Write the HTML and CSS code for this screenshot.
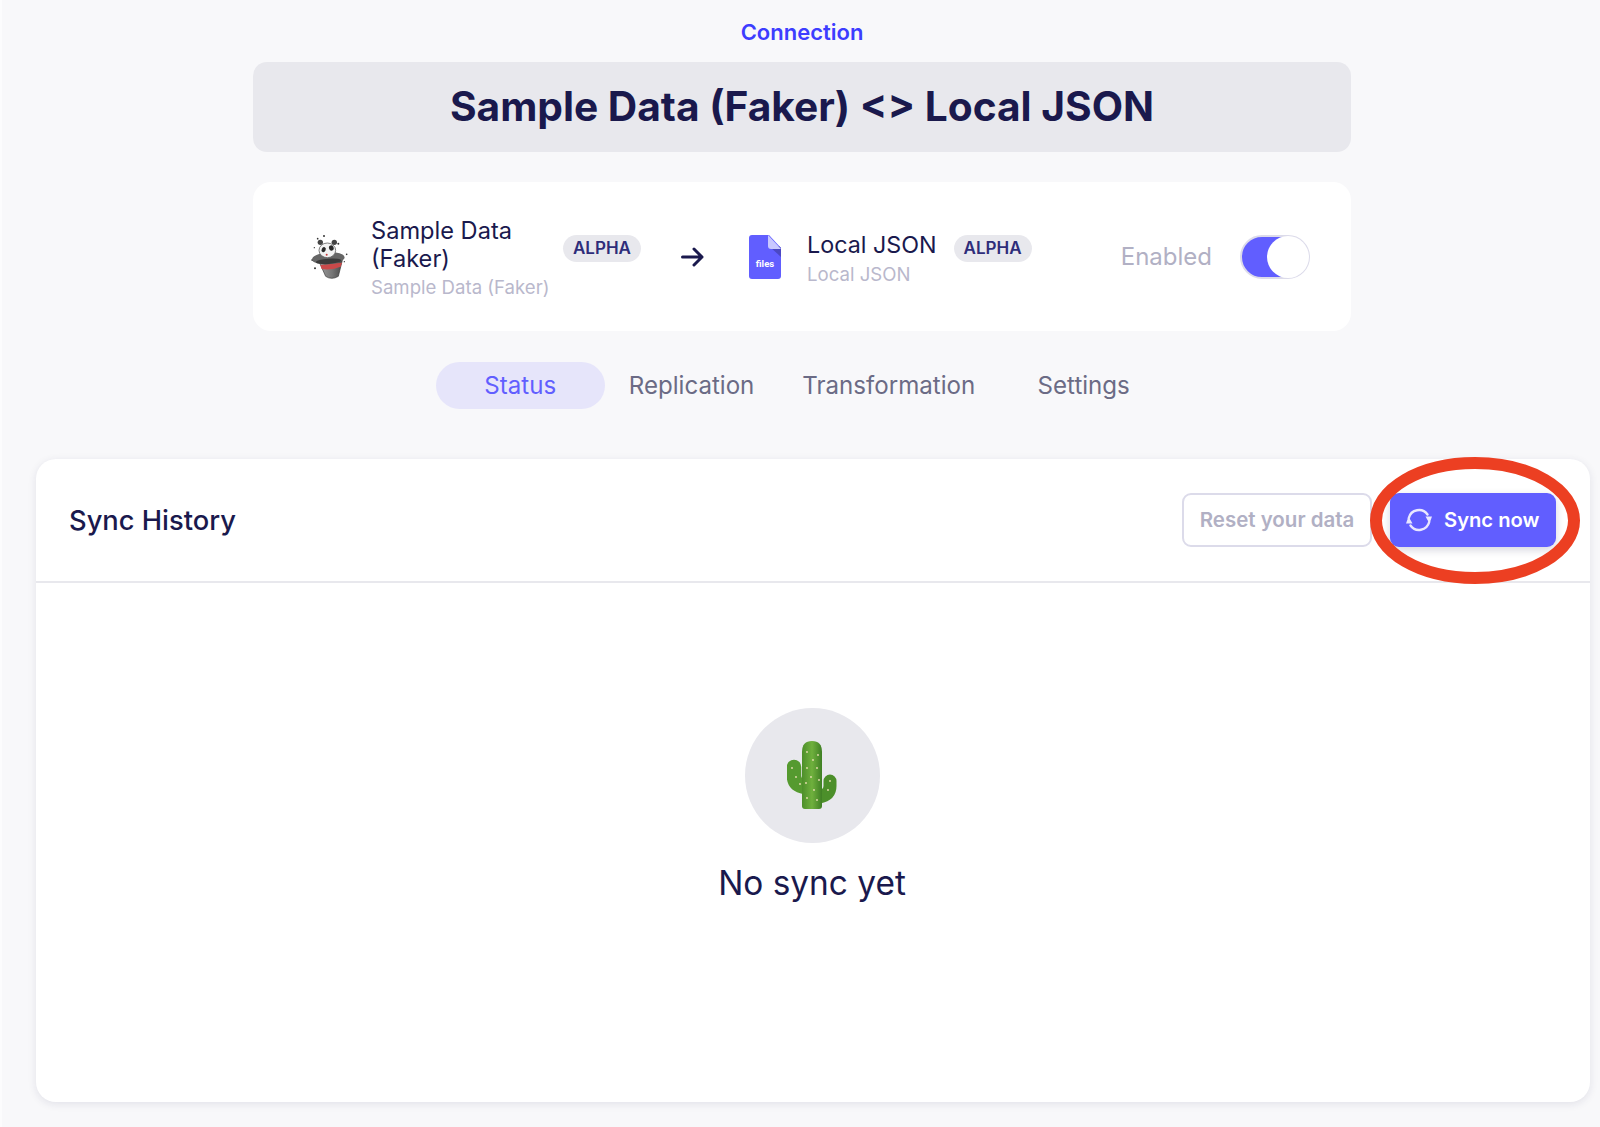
FILE: index.html
```html
<!DOCTYPE html>
<html lang="en">
<head>
<meta charset="utf-8">
<title>Connection</title>
<link rel="stylesheet" href="styles.css">
</head>
<body>
<div class="page">
  <div class="column">
    <div class="crumb">Connection</div>
    <h1 class="title">Sample Data (Faker) &lt;&gt; Local JSON</h1>
    <section class="conn-card">
      <svg class="panda" viewBox="0 0 144 156" aria-hidden="true">
        <defs>
          <linearGradient id="hatg" x1="0" y1="0" x2="1" y2="0">
            <stop offset="0" stop-color="#9a9a9a"/><stop offset=".55" stop-color="#767676"/><stop offset="1" stop-color="#4a4a4a"/>
          </linearGradient>
        </defs>
        <g fill="#333"><circle cx="57" cy="15" r="3"/><circle cx="38" cy="23" r="2.500"/><circle cx="100" cy="38" r="3"/><circle cx="28" cy="50" r="2"/><circle cx="22" cy="87" r="3"/><circle cx="30" cy="112" r="3"/><circle cx="125" cy="70" r="2.500"/><circle cx="118" cy="92" r="2"/></g>
        <path d="M44 96 L112 88 L100 136 Q80 148 62 136 Z" fill="url(#hatg)" stroke="#333" stroke-width="2"/>
        <path d="M46 102 L111 95 L107 107 Q78 119 50 114 Z" fill="#c8494a"/>
        <ellipse cx="70" cy="82" rx="49" ry="18" transform="rotate(-4 70 82)" fill="#666"/>
        <ellipse cx="71" cy="91" rx="38" ry="8" transform="rotate(-4 71 91)" fill="#3a3a3a"/>
        <circle cx="46" cy="34" r="8" fill="#444"/><circle cx="88" cy="34" r="8" fill="#444"/>
        <ellipse cx="67" cy="58" rx="25" ry="22" fill="#f2f2f2" stroke="#666" stroke-width="2.500"/>
        <ellipse cx="56" cy="56" rx="6" ry="8" transform="rotate(25 56 56)" fill="#2a2a2a"/>
        <ellipse cx="79" cy="51" rx="7" ry="8" transform="rotate(-20 79 51)" fill="#2a2a2a"/>
        <circle cx="65" cy="71" r="3" fill="#c43c3c"/>
      </svg>
      <div class="source-text">
        <div class="name">Sample Data (Faker)</div>
        <div class="sub">Sample Data (Faker)</div>
      </div>
      <span class="badge">ALPHA</span>
      <svg class="arrow" viewBox="0 0 23 20" aria-hidden="true">
        <path d="M1.500 10 H21 M13 2 L21 10 L13 18" fill="none" stroke="#1a194d" stroke-width="3" stroke-linecap="round" stroke-linejoin="round"/>
      </svg>
      <svg class="file" viewBox="0 0 32 44" aria-hidden="true">
        <path d="M3 0 H20 L32 13 V41 Q32 44 29 44 H3 Q0 44 0 41 V3 Q0 0 3 0 Z" fill="#615eff"/>
        <path d="M20 11 H30 L32 13 V22 Z" fill="#4b48c4"/>
        <path d="M19 0 L32 14 H22 Q19 14 19 11 Z" fill="#c9c8ff"/>
        <text x="16" y="32" class="file-label" text-anchor="middle">files</text>
      </svg>
      <div class="dest-text">
        <div class="name">Local JSON</div>
        <div class="sub">Local JSON</div>
      </div>
      <span class="badge">ALPHA</span>
      <span class="enabled">Enabled</span>
      <span class="toggle"><span class="knob"></span></span>
    </section>
    <nav class="tabs">
      <span class="tab active">Status</span>
      <span class="tab">Replication</span>
      <span class="tab">Transformation</span>
      <span class="tab">Settings</span>
    </nav>
  </div>
  <section class="main-card">
    <header class="main-head">
      <h2 class="main-title">Sync History</h2>
      <div class="actions">
        <button class="btn btn-ghost">Reset your data</button>
        <button class="btn btn-primary">
          <svg class="sync-icon" viewBox="0 0 26 26" aria-hidden="true">
            <path d="M2.800 11 A10.500 10.500 0 0 1 21.500 7.500 M23.200 15 A10.500 10.500 0 0 1 4.500 18.500" fill="none" stroke="#e8e7ff" stroke-width="2.400" stroke-linecap="round"/>
            <path d="M19.500 9.500 L26 9.500 L23.500 16.500 Z M6.500 16.500 L0 16.500 L2.500 9.500 Z" fill="#e8e7ff"/>
          </svg>
          Sync now
        </button>
      </div>
      <svg class="annotation" viewBox="0 0 210 127" aria-hidden="true">
        <ellipse cx="105" cy="63.500" rx="99" ry="57.500" fill="none" stroke="#ec3f22" stroke-width="12"/>
      </svg>
    </header>
    <div class="empty">
      <div class="empty-circle">
        <svg class="cactus" viewBox="788 741 51 69" aria-hidden="true">
          <defs>
            <linearGradient id="cg" x1="0" y1="0" x2="1" y2="0">
              <stop offset="0" stop-color="#4d8f2a"/><stop offset=".5" stop-color="#6fb03d"/><stop offset="1" stop-color="#3f7f24"/>
            </linearGradient>
          </defs>
          <path d="M795 767 V776 Q795 785 806 787" fill="none" stroke="#559a2f" stroke-width="14.500" stroke-linecap="round"/>
          <path d="M831 781 V786 Q831 795 820 797" fill="none" stroke="#4c8f2a" stroke-width="13" stroke-linecap="round"/>
          <path d="M803 752 Q803 741 813 741 Q823 741 823 752 V806 Q823 809 820 809 H806 Q803 809 803 806 Z" fill="url(#cg)"/>
          <g fill="#e8dfb0"><circle cx="808" cy="752" r=".9"/><circle cx="814" cy="760" r=".9"/><circle cx="819" cy="755" r=".9"/><circle cx="808" cy="768" r=".9"/><circle cx="818" cy="768" r=".9"/><circle cx="812" cy="777" r=".9"/><circle cx="820" cy="780" r=".9"/><circle cx="807" cy="783" r=".9"/><circle cx="815" cy="790" r=".9"/><circle cx="808" cy="798" r=".9"/><circle cx="818" cy="800" r=".9"/><circle cx="793" cy="768" r=".9"/><circle cx="797" cy="777" r=".9"/><circle cx="801" cy="784" r=".9"/><circle cx="831" cy="781" r=".9"/><circle cx="829" cy="790" r=".9"/></g>
        </svg>
      </div>
      <p class="empty-text">No sync yet</p>
    </div>
  </section>
</div>
</body>
</html>
```
FILE: styles.css
```css
* { box-sizing: border-box; }
html, body { margin: 0; height: 100%; }
body {
  background: #f8f8fa;
  color: #1a194d;
  font-family: Inter, "Liberation Sans", sans-serif;
}
.page {
  min-height: 1127px;
  padding: 16px 10px 25px 34px;
  border-left: 2px solid #fcfcfd;
}
.column {
  width: 1098px;
  margin-left: 217px;
}
.crumb {
  height: 32px;
  line-height: 32px;
  text-align: center;
  font-size: 22px;
  font-weight: 600;
  color: #3d3dff;
}
.title {
  height: 90px;
  margin: 14px 0 0;
  line-height: 90px;
  text-align: center;
  font-size: 40.700px;
  font-weight: 700;
  background: #e8e8ed;
  border-radius: 14px;
}
.conn-card {
  display: flex;
  align-items: center;
  height: 149px;
  margin-top: 30px;
  padding: 0 41px 0 52px;
  background: #fff;
  border-radius: 18px;
}
.panda { width: 48px; height: 52px; flex: none; }
.source-text { width: 192px; margin: 4px 0 0 18px; flex: none; }
.source-text .name { width: 180px; }
.dest-text { margin: 6px 17px 0 26px; }
.dest-text .name { font-size: 23.300px; }
.dest-text .sub { line-height: 28px; }
.name { font-size: 23.600px; line-height: 28.500px; }
.sub { font-size: 18.600px; line-height: 27px; color: #b9b8cc; }
.badge {
  flex: none;
  width: 78px;
  height: 27px;
  margin-top: -16px;
  line-height: 27px;
  text-align: center;
  font-size: 17px;
  font-weight: 600;
  color: #2e2d7a;
  background: #e8e8ed;
  border-radius: 14px;
}
.arrow { width: 23px; height: 20px; margin-left: 40px; flex: none; }
.file { width: 32px; height: 44px; margin-left: 45px; flex: none; }
.file-label { font-family: Roboto, sans-serif; font-size: 9.500px; font-weight: 700; fill: #fff; }
.enabled { margin-left: auto; font-size: 24px; color: #b1b0c4; }
.toggle {
  display: block;
  position: relative;
  width: 70px;
  height: 44px;
  margin-left: 28px;
  background: #615eff;
  border: 2px solid #dcdbea;
  border-radius: 22px;
}
.knob {
  position: absolute;
  top: -1px;
  right: -1px;
  width: 42px;
  height: 42px;
  background: #fff;
  border-radius: 50%;
}
.tabs {
  display: flex;
  justify-content: center;
  margin-top: 31px;
}
.tab {
  min-width: 169px;
  height: 47px;
  padding: 0 24px;
  line-height: 47px;
  text-align: center;
  font-size: 24.100px;
  color: #6b6b85;
  border-radius: 24px;
}
.tab.active { color: #615eff; background: #e6e5fa; }
.main-card {
  height: 643px;
  margin-top: 50px;
  background: #fff;
  border-radius: 20px;
  box-shadow: 0 2px 8px rgba(26, 25, 77, .1);
}
.main-head {
  position: relative;
  display: flex;
  align-items: center;
  justify-content: space-between;
  height: 124px;
  padding: 0 34px 0 33px;
  border-bottom: 2px solid #e8e8ed;
}
.main-title { margin: 0; font-size: 27.300px; font-weight: 500; }
.actions { display: flex; gap: 18px; }
.btn {
  display: flex;
  align-items: center;
  height: 54px;
  padding-bottom: 2px;
  font-family: inherit;
  font-weight: 600;
  border-radius: 9px;
}
.btn-ghost {
  justify-content: center;
  width: 190px;
  font-size: 20.500px;
  color: #b1b0c4;
  background: #fff;
  border: 2px solid #dcdbea;
}
.btn-primary {
  width: 166px;
  gap: 12px;
  padding-left: 16px;
  font-size: 20.200px;
  color: #fff;
  background: #615eff;
  border: 0;
  box-shadow: 0 3px 8px rgba(26, 25, 77, .18);
}
.sync-icon { width: 26px; height: 26px; flex: none; }
.annotation {
  position: absolute;
  top: -2px;
  right: 10px;
  width: 210px;
  height: 127px;
}
.empty {
  display: flex;
  flex-direction: column;
  align-items: center;
  padding: 125px 2px 0 0;
}
.empty-circle {
  display: flex;
  align-items: center;
  justify-content: center;
  width: 135px;
  height: 135px;
  background: #e8e8ed;
  border-radius: 50%;
}
.cactus { width: 51px; height: 69px; }
.empty-text { margin: 19px 0 0; font-size: 33.400px; line-height: 42px; }
```
